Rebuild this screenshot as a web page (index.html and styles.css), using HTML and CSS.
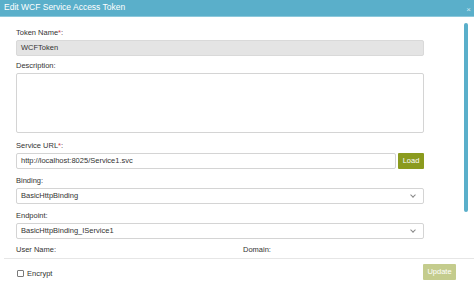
FILE: index.html
```html
<!DOCTYPE html>
<html>
<head>
<meta charset="utf-8">
<link rel="stylesheet" href="styles.css">
</head>
<body>
<div class="dialog">
  <div class="titlebar">
    <span class="title">Edit WCF Service Access Token</span>
    <span class="close">×</span>
  </div>
  <div class="content">
    <div class="form">
      <div class="group g-token">
        <div class="label">Token Name<span class="req">*</span>:</div>
        <div class="field disabled">WCFToken</div>
      </div>
      <div class="group g-desc">
        <div class="label">Description:</div>
        <div class="field area"></div>
      </div>
      <div class="group g-url">
        <div class="label">Service URL<span class="req">*</span>:</div>
        <div class="row">
          <div class="field grow">http://localhost:8025/Service1.svc</div>
          <div class="btn load">Load</div>
        </div>
      </div>
      <div class="group g-binding">
        <div class="label">Binding:</div>
        <div class="field select"><span>BasicHttpBinding</span><span class="chev"></span></div>
      </div>
      <div class="group g-endpoint">
        <div class="label">Endpoint:</div>
        <div class="field select"><span>BasicHttpBinding_IService1</span><span class="chev"></span></div>
      </div>
      <div class="group g-user">
        <div class="cols">
          <div class="label col">User Name:</div>
          <div class="label col">Domain:</div>
        </div>
      </div>
    </div>
    <div class="scroll"><div class="thumb"></div></div>
  </div>
  <div class="footer">
    <label class="check"><span class="box"></span>Encrypt</label>
    <div class="btn update">Update</div>
  </div>
</div>
</body>
</html>
```

FILE: styles.css
```css
html, body {
  margin: 0;
  padding: 0;
  background: #ffffff;
}
body {
  width: 474px;
  height: 289px;
  overflow: hidden;
  font-family: "Liberation Sans", Arial, sans-serif;
  color: #333333;
}
.dialog {
  display: flex;
  flex-direction: column;
  height: 289px;
}
.titlebar {
  height: 17px;
  background: #5aafca;
  border-bottom: 1px solid #8cc8db;
  box-sizing: border-box;
  display: flex;
  align-items: center;
  justify-content: space-between;
  padding: 0 4px 0 4px;
  color: #ffffff;
}
.title {
  font-size: 8.5px;
  line-height: 17px;
  margin-top: -1px;
}
.close {
  font-size: 8px;
  line-height: 8px;
  color: #cfe7ef;
  margin-top: 3px;
  margin-right: -1px;
}
.content {
  height: 241px;
  display: flex;
  overflow: hidden;
}
.form {
  width: 408px;
  margin-left: 16px;
  padding-top: 10px;
  display: flex;
  flex-direction: column;
}
.label {
  font-size: 7.5px;
  line-height: 11px;
  height: 11px;
  margin-bottom: 2px;
  color: #333333;
  white-space: nowrap;
}
.req { color: #d23c3c; }
.field {
  height: 16px;
  box-sizing: border-box;
  border: 1px solid #d4d4d4;
  border-radius: 2px;
  background: #ffffff;
  font-size: 7.5px;
  line-height: 14px;
  padding: 0 4px;
  color: #333333;
  white-space: nowrap;
}
.field.disabled {
  background: #e4e4e4;
  border-color: #d9d9d9;
}
.field.area {
  height: 60px;
}
.g-desc { margin-top: 4px; }
.g-url { margin-top: 7px; }
.g-binding, .g-endpoint { margin-top: 6px; }
.g-user { margin-top: 5px; }
.row {
  display: flex;
  gap: 2px;
}
.grow { flex: 1; }
.btn {
  height: 16px;
  box-sizing: border-box;
  font-size: 7.5px;
  line-height: 16px;
  color: #ffffff;
  text-align: center;
  border-radius: 1px;
  background: #8b9b1e;
}
.load {
  width: 26px;
}
.select {
  display: flex;
  justify-content: space-between;
  align-items: center;
}
.chev {
  width: 3px;
  height: 3px;
  border-right: 1px solid #888888;
  border-bottom: 1px solid #888888;
  transform: rotate(45deg);
  margin-right: 4px;
  margin-top: -2px;
}
.cols {
  display: flex;
}
.col:first-child {
  width: 227px;
}
.scroll {
  margin-left: 40px;
  padding-top: 6px;
}
.thumb {
  width: 4px;
  height: 189px;
  border-radius: 2px;
  background: #5aafca;
}
.footer {
  margin-left: 4px;
  border-top: 1px solid #e6e6e6;
  flex: 1;
  display: flex;
  align-items: flex-start;
  justify-content: space-between;
  padding: 5px 18px 0 13px;
}
.check {
  display: flex;
  align-items: center;
  font-size: 7.5px;
  color: #333333;
  margin-top: 5px;
}
.box {
  width: 7px;
  height: 7px;
  box-sizing: border-box;
  border: 1px solid #7a7a7a;
  border-radius: 1px;
  margin-right: 3px;
  background: #ffffff;
}
.update {
  width: 33px;
  opacity: 0.5;
}
```
